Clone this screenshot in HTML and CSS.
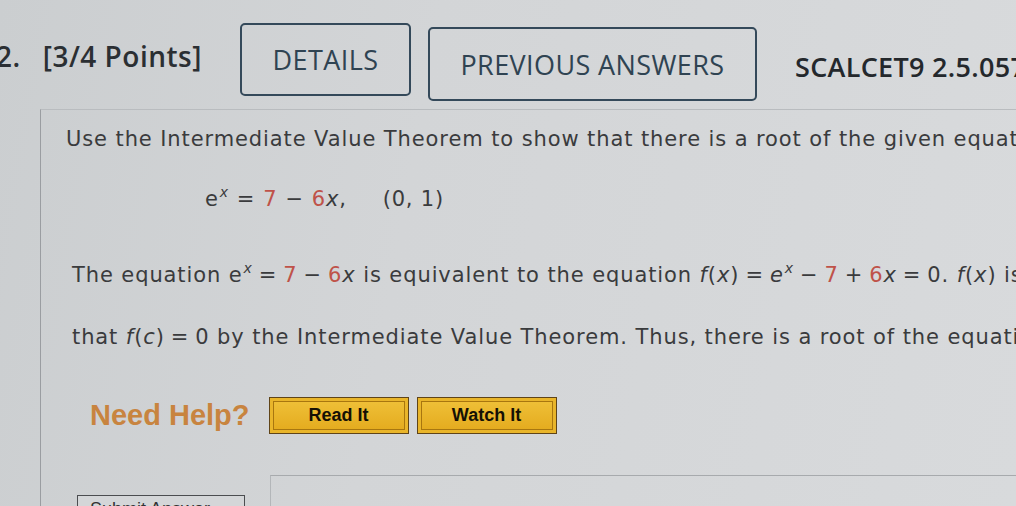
FILE: index.html
```html
<!DOCTYPE html>
<html lang="en">
<head>
<meta charset="utf-8">
<title>SCALCET9 2.5.057</title>
<link rel="stylesheet" href="styles.css">
</head>
<body>
<div class="page">
  <div class="header">
    <span class="qnum"><span class="qnum-n">2.</span><span class="qnum-pts">[3/4 Points]</span></span>
    <button class="tab tab-details">DETAILS</button>
    <button class="tab tab-prev">PREVIOUS ANSWERS</button>
    <span class="code">SCALCET9 2.5.057</span>
  </div>
  <div class="main">
    <p class="line line-intro">Use the Intermediate Value Theorem to show that there is a root of the given equation in the specified interval.</p>
    <p class="eq">
      <span class="m">e<sup class="sup"><i>x</i></sup></span><span class="op">=</span><span class="red">7</span><span class="op">−</span><span class="red">6</span><i>x</i>,<span class="interval">(0, 1)</span>
    </p>
    <p class="line line-a">The equation <span class="m">e<sup class="sup"><i>x</i></sup></span><span class="op">=</span><span class="red">7</span><span class="op">−</span><span class="red">6</span><i>x</i> is equivalent to the equation <i>f</i>(<i>x</i>)<span class="op">=</span><i>e</i><sup class="sup"><i>x</i></sup><span class="op">−</span><span class="red">7</span><span class="op">+</span><span class="red">6</span><i>x</i><span class="op">=</span>0. <i>f</i>(<i>x</i>) is continuous on the interval</p>
    <p class="line line-b">that <i>f</i>(<i>c</i>)<span class="op">=</span>0 by the Intermediate Value Theorem. Thus, there is a root of the equation in the interval.</p>
    <div class="help">
      <span class="help-label">Need Help?</span>
      <button class="gold">Read It</button>
      <button class="gold">Watch It</button>
    </div>
    <div class="bottom">
      <button class="submit">Submit Answer</button>
      <div class="panel"></div>
    </div>
  </div>
</div>
</body>
</html>
```
FILE: styles.css
```css
html, body {
  margin: 0;
  padding: 0;
}
body {
  width: 1016px;
  height: 506px;
  overflow: hidden;
  background: linear-gradient(100deg, #cbced0 0%, #d3d5d7 40%, #d8dadc 100%);
}
.page {
  width: 1016px;
  height: 506px;
  overflow: hidden;
}
.header {
  display: flex;
  align-items: flex-start;
  height: 109px;
  white-space: nowrap;
}
.qnum {
  flex: 0 0 244px;
  margin-left: -4px;
  margin-top: 39px;
  font-family: "Open Sans", sans-serif;
  font-weight: 600;
  font-size: 28px;
  line-height: 34px;
  letter-spacing: 0.5px;
  color: #2b2f33;
}
.qnum-pts {
  margin-left: 22px;
}
.tab {
  flex: none;
  box-sizing: border-box;
  background: transparent;
  border: 2px solid #34495a;
  border-radius: 5px;
  font-family: "Open Sans", sans-serif;
  font-size: 27px;
  letter-spacing: 0.4px;
  color: #2f4352;
  padding: 0;
}
.tab-details {
  width: 171px;
  height: 73px;
  margin-top: 23px;
}
.tab-prev {
  width: 329px;
  height: 74px;
  margin-top: 27px;
  margin-left: 17px;
}
.code {
  margin-left: 38px;
  margin-top: 51px;
  font-family: "Open Sans", sans-serif;
  font-weight: 600;
  font-size: 27px;
  line-height: 32px;
  letter-spacing: 0.3px;
  color: #24282c;
}
.main {
  margin-left: 40px;
  border-left: 1px solid #9a9da1;
  border-top: 1px solid #b9bcbf;
  height: 400px;
  font-family: "DejaVu Sans", Verdana, sans-serif;
  color: #3a3b3d;
}
.line {
  margin: 0;
  font-size: 21px;
  line-height: 24px;
  letter-spacing: 0.9px;
  white-space: nowrap;
}
.line .op {
  margin: 0 6px;
}
.line-intro {
  padding-top: 17px;
  padding-left: 25px;
}
.line-a {
  margin-top: 52px;
  padding-left: 31px;
}
.line-b {
  margin-top: 38px;
  padding-left: 31px;
}
.eq {
  margin: 36px 0 0 0;
  padding-left: 164px;
  font-size: 21px;
  line-height: 24px;
  letter-spacing: 0.8px;
  white-space: nowrap;
}
.sup {
  font-size: 14px;
  line-height: 0;
  vertical-align: 9px;
  margin-left: 1px;
}
.op {
  margin: 0 8px;
}
.red {
  color: #bf5249;
}
.interval {
  margin-left: 36px;
}
.help {
  display: flex;
  align-items: center;
  margin-top: 48px;
  padding-left: 49px;
}
.help-label {
  font-family: "Liberation Sans", Arial, sans-serif;
  font-weight: bold;
  font-size: 29px;
  color: #c8843f;
  margin-right: 19px;
}
.gold {
  box-sizing: border-box;
  width: 140px;
  height: 37px;
  margin-right: 8px;
  padding: 0;
  border: 1px solid #5f4418;
  box-shadow: inset 0 0 0 3px #e9b52a, inset 0 0 0 4px #a8760f;
  background: linear-gradient(#f0c23a, #e3a91c);
  font-family: "Liberation Sans", Arial, sans-serif;
  font-weight: bold;
  font-size: 18px;
  color: #151005;
}
.bottom {
  display: flex;
  align-items: flex-start;
  margin-top: 41px;
}
.submit {
  box-sizing: border-box;
  margin-top: 20px;
  margin-left: 36px;
  width: 168px;
  height: 36px;
  background: #d4d6d8;
  border: 1px solid #4b4d50;
  font-family: "Liberation Sans", Arial, sans-serif;
  font-size: 18px;
  color: #333;
  padding: 3px 12px 0;
  line-height: 20px;
  display: flex;
  align-items: flex-start;
}
.panel {
  flex: 1;
  margin-left: 25px;
  height: 60px;
  border-top: 1px solid #a7aaad;
  border-left: 1px solid #b3b6b9;
}
```
